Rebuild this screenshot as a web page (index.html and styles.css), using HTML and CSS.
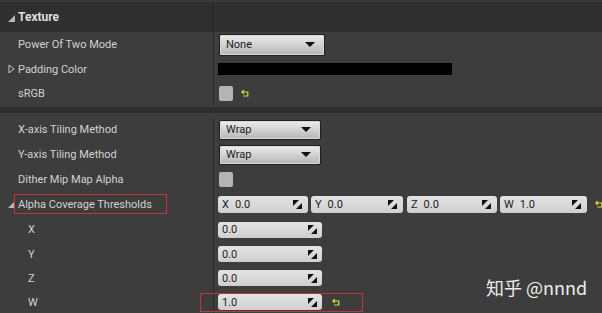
FILE: index.html
```html
<!DOCTYPE html>
<html>
<head>
<meta charset="utf-8">
<link rel="stylesheet" href="styles.css">
</head>
<body>
<div class="panel">
  <div class="header">
    <div class="name head-name"><svg class="caret" width="7" height="7" viewBox="0 0 7 7"><polygon points="7,0 7,7 0,7" fill="#b8b8b8"/></svg><span>Texture</span></div>
    <div class="value"></div>
  </div>
  <div class="row r25">
    <div class="name">Power Of Two Mode</div>
    <div class="value"><div class="combo"><span>None</span><i class="arrow"></i></div></div>
  </div>
  <div class="row r24">
    <div class="name caretted"><svg class="caret" width="7" height="10" viewBox="0 0 7 10"><polygon points="1,1 6,5 1,9" fill="none" stroke="#c8c8c8" stroke-width="1"/></svg><span>Padding Color</span></div>
    <div class="value"><div class="colorbar"></div></div>
  </div>
  <div class="row r24">
    <div class="name">sRGB</div>
    <div class="value"><div class="check"></div><svg class="reset" width="8" height="7" viewBox="0 0 8 7"><path d="M0.8 2 H6.8 V6 H2.2 M2.8 0.2 L0.8 2 L2.8 3.8" fill="none" stroke="#dcdc3c" stroke-width="1.2"/></svg></div>
  </div>
  <div class="sep"></div>
  <div class="row r25">
    <div class="name">X-axis Tiling Method</div>
    <div class="value"><div class="combo small"><span>Wrap</span><i class="arrow"></i></div></div>
  </div>
  <div class="row r25">
    <div class="name">Y-axis Tiling Method</div>
    <div class="value"><div class="combo small"><span>Wrap</span><i class="arrow"></i></div></div>
  </div>
  <div class="row r25">
    <div class="name">Dither Mip Map Alpha</div>
    <div class="value"><div class="check"></div></div>
  </div>
  <div class="row r25">
    <div class="name caretted"><svg class="caret" width="7" height="7" viewBox="0 0 7 7"><polygon points="7,0 7,7 0,7" fill="#b8b8b8"/></svg><span>Alpha Coverage Thresholds</span></div>
    <div class="value vec">
      <div class="vfield w90"><span class="axis">X</span><span class="num">0.0</span><svg class="spin" width="9" height="9" viewBox="0 0 9 9"><polygon points="0,0 6,0 0,6" fill="#111"/><polygon points="9,9 3,9 9,3" fill="#111"/></svg></div>
      <div class="vfield w91"><span class="axis">Y</span><span class="num">0.0</span><svg class="spin" width="9" height="9" viewBox="0 0 9 9"><polygon points="0,0 6,0 0,6" fill="#111"/><polygon points="9,9 3,9 9,3" fill="#111"/></svg></div>
      <div class="vfield w90"><span class="axis">Z</span><span class="num">0.0</span><svg class="spin" width="9" height="9" viewBox="0 0 9 9"><polygon points="0,0 6,0 0,6" fill="#111"/><polygon points="9,9 3,9 9,3" fill="#111"/></svg></div>
      <div class="vfield w87"><span class="axis">W</span><span class="num">1.0</span><svg class="spin" width="9" height="9" viewBox="0 0 9 9"><polygon points="0,0 6,0 0,6" fill="#111"/><polygon points="9,9 3,9 9,3" fill="#111"/></svg></div>
      <svg class="reset tight" width="8" height="7" viewBox="0 0 8 7"><path d="M0.8 2 H6.8 V6 H2.2 M2.8 0.2 L0.8 2 L2.8 3.8" fill="none" stroke="#dcdc3c" stroke-width="1.2"/></svg>
    </div>
  </div>
  <div class="row r25">
    <div class="name sub">X</div>
    <div class="value"><div class="sfield"><span class="num">0.0</span><svg class="spin" width="9" height="9" viewBox="0 0 9 9"><polygon points="0,0 6,0 0,6" fill="#111"/><polygon points="9,9 3,9 9,3" fill="#111"/></svg></div></div>
  </div>
  <div class="row r24">
    <div class="name sub">Y</div>
    <div class="value"><div class="sfield"><span class="num">0.0</span><svg class="spin" width="9" height="9" viewBox="0 0 9 9"><polygon points="0,0 6,0 0,6" fill="#111"/><polygon points="9,9 3,9 9,3" fill="#111"/></svg></div></div>
  </div>
  <div class="row r24">
    <div class="name sub">Z</div>
    <div class="value"><div class="sfield"><span class="num">0.0</span><svg class="spin" width="9" height="9" viewBox="0 0 9 9"><polygon points="0,0 6,0 0,6" fill="#111"/><polygon points="9,9 3,9 9,3" fill="#111"/></svg></div></div>
  </div>
  <div class="row r24">
    <div class="name sub">W</div>
    <div class="value"><div class="sfield"><span class="num">1.0</span><svg class="spin" width="9" height="9" viewBox="0 0 9 9"><polygon points="0,0 6,0 0,6" fill="#111"/><polygon points="9,9 3,9 9,3" fill="#111"/></svg></div><svg class="reset wide" width="8" height="7" viewBox="0 0 8 7"><path d="M0.8 2 H6.8 V6 H2.2 M2.8 0.2 L0.8 2 L2.8 3.8" fill="none" stroke="#dcdc3c" stroke-width="1.2"/></svg></div>
  </div>

  <div class="mark mark-alpha"></div>
  <div class="mark mark-w"></div>
  <div class="watermark">知乎 @nnnd</div>
</div>
</body>
</html>
```

FILE: styles.css
```css
html, body {
  margin: 0;
  padding: 0;
  background: #3d3d3d;
  overflow: hidden;
}
.panel {
  position: relative;
  width: 602px;
  height: 313px;
  font-family: Roboto, "Liberation Sans", sans-serif;
  font-size: 11px;
  color: #d2d2d2;
  background: #3d3d3d;
}
.header {
  display: flex;
  height: 32px;
  background: #2f2f2f;
  border-top: 2px solid #393939;
  box-sizing: border-box;
}
.row {
  display: flex;
}
.r25 { height: 25px; }
.r24 { height: 24px; }
.name {
  width: 214px;
  flex: none;
  box-sizing: border-box;
  border-right: 1px solid #2a2a2a;
  display: flex;
  align-items: center;
  padding-left: 18px;
  white-space: nowrap;
}
.head-name {
  padding-left: 5px;
  font-size: 12px;
  font-weight: bold;
  color: #dedede;
  border-right-color: #262626;
}
.caretted {
  padding-left: 5px;
}
.caret {
  width: 13px;
  flex: none;
}
.head-name .caret { margin-top: 2px; }
.sub {
  padding-left: 28px;
}
.value {
  flex: 1;
  display: flex;
  align-items: center;
  padding-left: 4px;
}
.sep {
  height: 12px;
  background: linear-gradient(#3d3d3d 0, #3d3d3d 2px, #2e2e2e 2px, #2e2e2e 8px, #3d3d3d 8px);
}
.combo {
  margin-left: 1px;
  width: 106px;
  height: 22px;
  box-sizing: border-box;
  border: 1px solid #202020;
  border-radius: 2px;
  background: linear-gradient(#ececec, #b6b6b6);
  box-shadow: inset 0 0 0 1px #d8d8d8;
  display: flex;
  align-items: center;
  justify-content: space-between;
  padding: 0 9px 0 6px;
  color: #1c1c1c;
}
.combo.small {
  width: 102px;
  height: 20px;
}
.arrow {
  width: 0;
  height: 0;
  border-left: 5px solid transparent;
  border-right: 5px solid transparent;
  border-top: 5px solid #111;
}
.colorbar {
  width: 234px;
  height: 12px;
  background: #000;
}
.check {
  margin-left: 1px;
  width: 14px;
  height: 15px;
  border-radius: 2px;
  background: #b4b4b4;
}
.reset {
  margin-left: 8px;
  flex: none;
}
.reset.tight { margin-left: 5px; }
.reset.wide { margin-left: 10px; }
.vec {
  gap: 3px;
}
.vfield {
  height: 17px;
  box-sizing: border-box;
  border-radius: 3px;
  background: linear-gradient(#e4e4e4, #cfcfcf);
  display: flex;
  align-items: center;
  padding: 0 6px 0 4px;
  color: #1e1e1e;
}
.w90 { width: 90px; }
.w91 { width: 92px; margin-right: 1px; }
.w87 { width: 87px; }
.axis {
  margin-right: 6px;
}
.num {
  flex: 1;
}
.spin {
  flex: none;
}
.sfield {
  width: 104px;
  height: 16px;
  box-sizing: border-box;
  border-radius: 3px;
  background: linear-gradient(#e4e4e4, #cfcfcf);
  display: flex;
  align-items: center;
  padding: 0 5px 0 4px;
  color: #1e1e1e;
}
.mark {
  position: absolute;
  border: 1px solid #c4323a;
  box-sizing: border-box;
}
.mark-alpha {
  left: 14px;
  top: 194px;
  width: 153px;
  height: 20px;
}
.mark-w {
  left: 200px;
  top: 293px;
  width: 163px;
  height: 19px;
}
.watermark {
  position: absolute;
  left: 486px;
  top: 276px;
  font-family: "Noto Sans CJK SC", "Noto Sans", sans-serif;
  font-size: 18px;
  line-height: 22px;
  color: #ececec;
  white-space: nowrap;
}
```
